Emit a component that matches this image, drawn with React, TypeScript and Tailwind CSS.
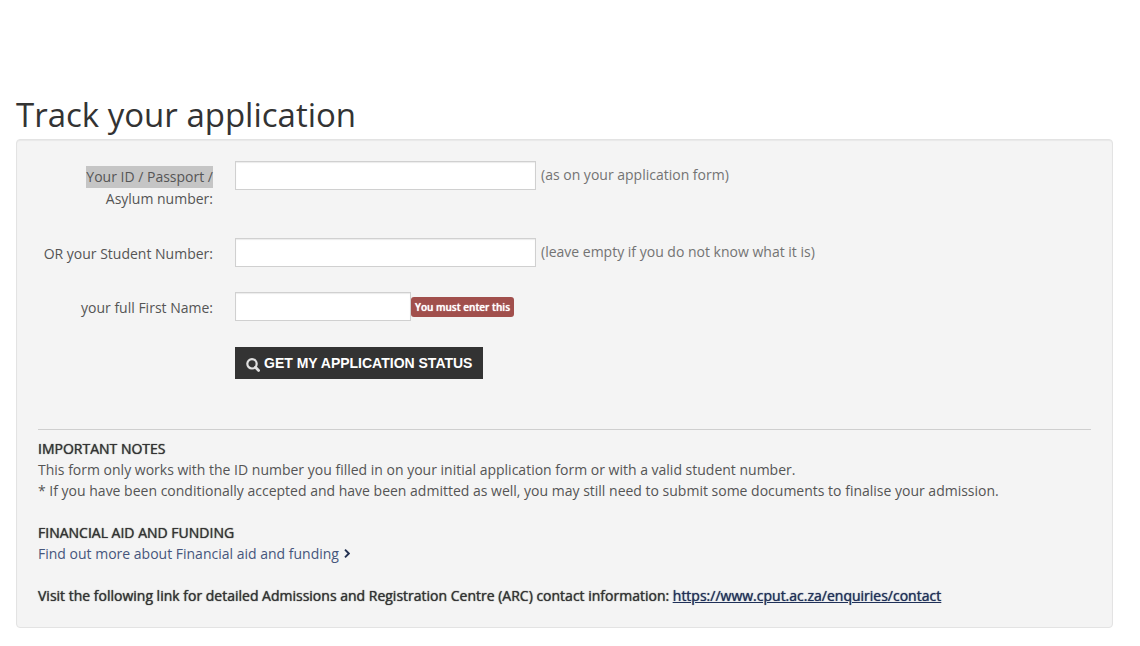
import React from 'react';

type FieldProps = {
  id: string;
  label: React.ReactNode;
  inputClass: string;
  children?: React.ReactNode;
};

const Field: React.FC<FieldProps> = ({ id, label, inputClass, children }) => (
  <div className="flex items-start">
    <label htmlFor={id} className="mr-[22px] w-[175px] shrink-0 pt-[5px] text-right leading-[22px]">
      {label}
    </label>
    <div className="flex min-w-0 items-center">
      <input
        id={id}
        type="text"
        className={`h-[29px] min-w-0 border border-[#d0d0d0] bg-white px-2 shadow-[inset_0_1px_1px_rgba(0,0,0,0.08)] outline-none focus:border-gray-500 ${inputClass}`}
      />
      {children}
    </div>
  </div>
);

const SearchIcon: React.FC = () => (
  <svg className="mt-[3px] h-[14px] w-[14px] shrink-0" viewBox="0 0 14 14" fill="none" stroke="#e0e0e0" aria-hidden="true">
    <circle cx="6" cy="5.8" r="4.7" strokeWidth="2.2" />
    <path d="M9.5 9.3l3.1 3.1" strokeWidth="2.8" strokeLinecap="round" />
  </svg>
);

const TrackForm: React.FC = () => (
  <form onSubmit={(e) => e.preventDefault()}>
    <Field
      id="idNumber"
      inputClass="w-[301px]"
      label={
        <>
          <span className="bg-[#c5c5c5] pt-px pb-0.5">Your ID / Passport /</span> Asylum number:
        </>
      }
    >
      <span className="ml-[5px] pb-0.5 text-[#737373]">(as on your application form)</span>
    </Field>

    <div className="mt-7">
      <Field id="studentNumber" inputClass="w-[301px]" label="OR your Student Number:">
        <span className="ml-[5px] pb-0.5 text-[#737373]">(leave empty if you do not know what it is)</span>
      </Field>
    </div>

    <div className="mt-[25px]">
      <Field id="firstName" inputClass="w-[176px]" label="your full First Name:">
        <span role="alert" className="rounded-[3px] bg-[#a14f4c] px-1 text-[10px] leading-5 font-semibold text-white [text-shadow:0_0_1px_currentColor]">
          You must enter this
        </span>
      </Field>
    </div>

    <button
      type="submit"
      className="mt-[26px] ml-[197px] flex h-8 items-center gap-1 bg-[#333] px-[11px] font-['Liberation_Sans',sans-serif] text-[14px] font-bold text-white"
    >
      <SearchIcon />
      GET MY APPLICATION STATUS
    </button>
  </form>
);

const Notes: React.FC = () => (
  <div className="mt-[50px] border-t border-[#cfcfcf] pt-2 leading-[21px]">
    <h2 className="text-[#333] [text-shadow:0_0_1px_currentColor]">IMPORTANT NOTES</h2>
    <p>This form only works with the ID number you filled in on your initial application form or with a valid student number.</p>
    <p>* If you have been conditionally accepted and have been admitted as well, you may still need to submit some documents to finalise your admission.</p>

    <h2 className="mt-[21px] text-[#333] [text-shadow:0_0_1px_currentColor]">FINANCIAL AID AND FUNDING</h2>
    <a href="#funding" className="inline-flex items-center gap-[5px] text-[#46567c]">
      Find out more about Financial aid and funding
      <svg className="h-[9px] w-[6px]" viewBox="0 0 6 9" fill="none" stroke="#243252" strokeWidth="1.9" aria-hidden="true">
        <path d="M1 .7l3.8 3.8L1 8.3" />
      </svg>
    </a>

    <p className="mt-[21px] text-[#333] [text-shadow:0_0_1px_currentColor]">
      Visit the following link for detailed Admissions and Registration Centre (ARC) contact information:{' '}
      <a href="https://www.cput.ac.za/enquiries/contact" className="text-[#1f3058] underline [text-shadow:0_0_1px_currentColor]">
        https://www.cput.ac.za/enquiries/contact
      </a>
    </p>
  </div>
);

export default function App() {
  return (
    <main className="min-h-screen bg-white pt-[92px] pr-[27px] pb-[18px] pl-4 font-['Open_Sans',sans-serif] text-[14px] text-[#555]">
      <h1 className="pb-px text-[33px] leading-[46px] text-[#333]">Track your application</h1>
      <section className="rounded-[4px] border border-[#e3e3e3] bg-[#f4f4f4] px-[21px] pt-[21px] pb-[21px] shadow-[inset_0_1px_1px_rgba(0,0,0,0.05)]">
        <TrackForm />
        <Notes />
      </section>
    </main>
  );
}
